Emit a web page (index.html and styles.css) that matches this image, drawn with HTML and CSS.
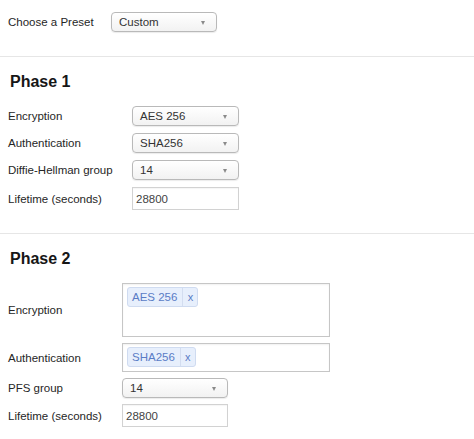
FILE: index.html
```html
<!DOCTYPE html>
<html>
<head>
<meta charset="utf-8">
<link rel="stylesheet" href="styles.css">
</head>
<body>
<div class="preset">
  <span class="label preset-label">Choose a Preset</span>
  <div class="select w106"><span>Custom</span><i class="caret"></i></div>
</div>

<section class="phase">
  <h2>Phase 1</h2>
  <div class="form-grid grid-p1">
    <span class="label">Encryption</span>
    <div class="select w107"><span>AES 256</span><i class="caret"></i></div>
    <span class="label">Authentication</span>
    <div class="select w107"><span>SHA256</span><i class="caret"></i></div>
    <span class="label">Diffie-Hellman group</span>
    <div class="select w107"><span>14</span><i class="caret"></i></div>
    <span class="label">Lifetime (seconds)</span>
    <div class="input w107">28800</div>
  </div>
</section>

<section class="phase">
  <h2>Phase 2</h2>
  <div class="form-grid grid-p2">
    <span class="label">Encryption</span>
    <div class="multi tall"><span class="tag"><span class="tag-text">AES 256</span><span class="tag-x">x</span></span></div>
    <span class="label">Authentication</span>
    <div class="multi"><span class="tag"><span class="tag-text">SHA256</span><span class="tag-x">x</span></span></div>
    <span class="label">PFS group</span>
    <div class="select w106"><span>14</span><i class="caret"></i></div>
    <span class="label">Lifetime (seconds)</span>
    <div class="input w106">28800</div>
  </div>
</section>
</body>
</html>
```

FILE: styles.css
```css
* { box-sizing: border-box; }

body {
  margin: 0;
  background: #fff;
  font-family: "Liberation Sans", Arial, sans-serif;
  font-size: 11.5px;
  color: #222;
}

.label {
  white-space: nowrap;
  color: #262626;
}

.preset {
  display: flex;
  align-items: center;
  padding: 12px 8px 24px;
  border-bottom: 1px solid #e6e6e6;
}

.preset-label {
  width: 103px;
}

.phase {
  padding: 15px 8px 23px;
  border-bottom: 1px solid #e6e6e6;
}

.phase:last-child {
  border-bottom: none;
}

.phase h2 {
  margin: 0 0 14px 2px;
  font-size: 16px;
  line-height: 20px;
  font-weight: bold;
  color: #161616;
}

.form-grid {
  display: grid;
  align-items: center;
}

.grid-p1 {
  grid-template-columns: 124px auto;
  row-gap: 7px;
}

.grid-p2 {
  grid-template-columns: 114px auto;
  row-gap: 6px;
}

.select {
  position: relative;
  display: flex;
  align-items: center;
  height: 20px;
  padding: 0 7px;
  border: 1px solid #b9b9b9;
  border-radius: 4px;
  background: linear-gradient(#ffffff, #f2f2f2);
  box-shadow: 0 1px 1px rgba(0, 0, 0, 0.08);
  color: #333;
}

.caret {
  position: absolute;
  right: 11px;
  top: 8px;
  width: 0;
  height: 0;
  border-left: 2.5px solid transparent;
  border-right: 2.5px solid transparent;
  border-top: 4px solid #8a8a8a;
}

.w106 { width: 106px; }
.w107 { width: 107px; }

.input {
  display: flex;
  align-items: center;
  height: 23px;
  padding: 0 3px;
  border: 1px solid #d2d2d2;
  box-shadow: inset 0 1px 1px rgba(0, 0, 0, 0.04);
  color: #444;
}

.multi {
  width: 208px;
  height: 29px;
  padding: 3px 4px;
  border: 1px solid #c6c6c6;
  box-shadow: inset 0 1px 2px rgba(0, 0, 0, 0.06);
  background: #fff;
}

.multi.tall {
  height: 54px;
}

.tag {
  display: inline-flex;
  align-items: stretch;
  height: 20px;
  border: 1px solid #cfdbf0;
  border-radius: 3px;
  background: #e7effc;
  color: #5a7cc6;
}

.tag-text {
  display: flex;
  align-items: center;
  padding: 0 5px 0 4px;
  border-right: 1px solid #d3ddf0;
}

.tag-x {
  display: flex;
  align-items: center;
  justify-content: center;
  width: 14px;
  font-size: 11px;
}
```
